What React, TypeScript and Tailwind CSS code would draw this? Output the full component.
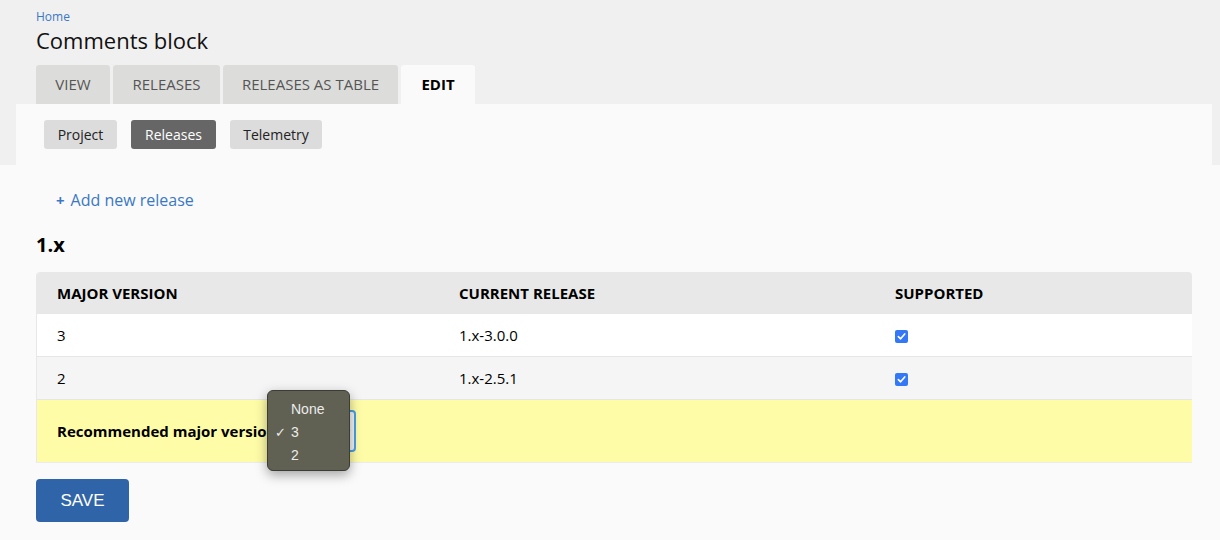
import React from 'react';

const tabs = [
  { label: 'View', w: 'w-[74px]' },
  { label: 'Releases', w: 'w-[107px]' },
  { label: 'Releases as table', w: 'w-[175px]' },
  { label: 'Edit', w: 'w-[74px]' },
];
const subTabs = [
  { label: 'Project', w: 'w-[73px]' },
  { label: 'Releases', w: 'w-[85px]' },
  { label: 'Telemetry', w: 'w-[92px]' },
];

const rows = [
  { major: '3', release: '1.x-3.0.0', bg: 'bg-white' },
  { major: '2', release: '1.x-2.5.1', bg: 'bg-[#f5f5f5]' },
];

const Checkbox = () => (
  <span className="inline-flex w-[13px] h-[13px] rounded-[2px] bg-[#3478f6] items-center justify-center">
    <svg width="9" height="9" viewBox="0 0 10 10" fill="none">
      <path d="M1.5 5.2 L4 7.6 L8.6 2.2" stroke="white" strokeWidth="1.8" strokeLinecap="round" strokeLinejoin="round" />
    </svg>
  </span>
);

export default function App() {
  return (
    <div className="w-[1220px] h-[540px] bg-[#fafafa] text-black overflow-hidden" style={{ fontFamily: '"Open Sans", "Noto Sans", sans-serif' }}>
      {/* Header */}
      <div className="bg-[#f0f0f0]">
        <div className="px-[36px] pt-[9px]">
          <a className="block text-[12px] leading-[16px] text-[#3b78c4]">Home</a>
          <h1 className="text-[22px] leading-[30px] text-[#111]">Comments block</h1>
          <div className="flex gap-[3px] mt-[10px] h-[39px]">
            {tabs.map((t) => {
              const active = t.label === 'Edit';
              return (
                <div
                  key={t.label}
                  className={
                    'flex items-center justify-center rounded-t-[3px] uppercase text-[15px] ' +
                    t.w +
                    ' ' +
                    (active ? 'bg-[#fafafa] font-bold text-black' : 'bg-[#dcdcdb] text-[#555]')
                  }
                >
                  {t.label}
                </div>
              );
            })}
          </div>
        </div>
        <div className="pl-[16px] pr-[8px]">
          <div className="bg-[#fafafa] h-[61px] flex items-start gap-[14px] pl-[28px] pt-[16px]">
            {subTabs.map((s) => {
              const active = s.label === 'Releases';
              return (
                <div
                  key={s.label}
                  className={
                    'h-[29px] flex items-center justify-center rounded-[3px] text-[14px] ' +
                    s.w +
                    ' ' +
                    (active ? 'bg-[#666] text-white' : 'bg-[#dcdcdc] text-[#222]')
                  }
                >
                  {s.label}
                </div>
              );
            })}
          </div>
        </div>
      </div>

      {/* Content */}
      <div className="px-[36px]">
        <a className="flex items-center gap-[6px] ml-[20px] mt-[24px] text-[16px] leading-[22px] text-[#3b78c4]">
          <span className="font-bold text-[15px]">+</span>
          <span>Add new release</span>
        </a>
        <h2 className="text-[20px] leading-[26px] font-bold mt-[21px]">1.x</h2>

        <div className="mt-[14px] w-[1156px] border-l border-[#e8e8e8] rounded-t-[4px] text-[15px]">
          <div className="flex h-[42px] items-center bg-[#e8e8e8] rounded-t-[4px] font-bold uppercase">
            <div className="w-[402px] pl-[20px]">Major version</div>
            <div className="w-[436px] pl-[20px]">Current release</div>
            <div className="flex-1 pl-[20px]">Supported</div>
          </div>
          {rows.map((r) => (
            <div key={r.major} className={'flex h-[43px] items-center border-b border-[#e6e6e6] ' + r.bg}>
              <div className="w-[402px] pl-[20px]">{r.major}</div>
              <div className="w-[436px] pl-[20px]">{r.release}</div>
              <div className="flex-1 pl-[20px] flex items-center pt-[2px]">
                <Checkbox />
              </div>
            </div>
          ))}
          <div className="flex h-[63px] items-center bg-[#fffca8] border-b border-[#ececec] pl-[20px]">
            <span className="font-bold w-[222px] whitespace-nowrap">Recommended major version</span>
            <div className="relative">
              <div className="w-[77px] h-[42px] border-2 border-[#4a9ee6] rounded-[4px] bg-[#f3f3f3] flex items-center justify-end pr-[4px] text-[10px]">
                ▾
              </div>
              <div
                className="absolute left-[-12px] top-[-20px] w-[83px] h-[81px] rounded-[6px] bg-[#606153] border border-[#3c3c36] shadow-[0_4px_12px_rgba(0,0,0,0.35)] text-[#ececec] text-[14px] flex flex-col pt-[7px]"
                style={{ fontFamily: '"Liberation Sans", Arial, sans-serif' }}
              >
                <div className="h-[23px] flex items-center pl-[23px]">None</div>
                <div className="h-[23px] flex items-center relative pl-[23px]">
                  <span className="absolute left-[7px] text-[13px]">✓</span>3
                </div>
                <div className="h-[23px] flex items-center pl-[23px]">2</div>
              </div>
            </div>
          </div>
        </div>

        <button
          className="mt-[16px] w-[93px] h-[43px] bg-[#3064a8] rounded-[4px] text-white text-[17px] uppercase"
          style={{ fontFamily: '"Liberation Sans", Arial, sans-serif' }}
        >
          Save
        </button>
      </div>
    </div>
  );
}
